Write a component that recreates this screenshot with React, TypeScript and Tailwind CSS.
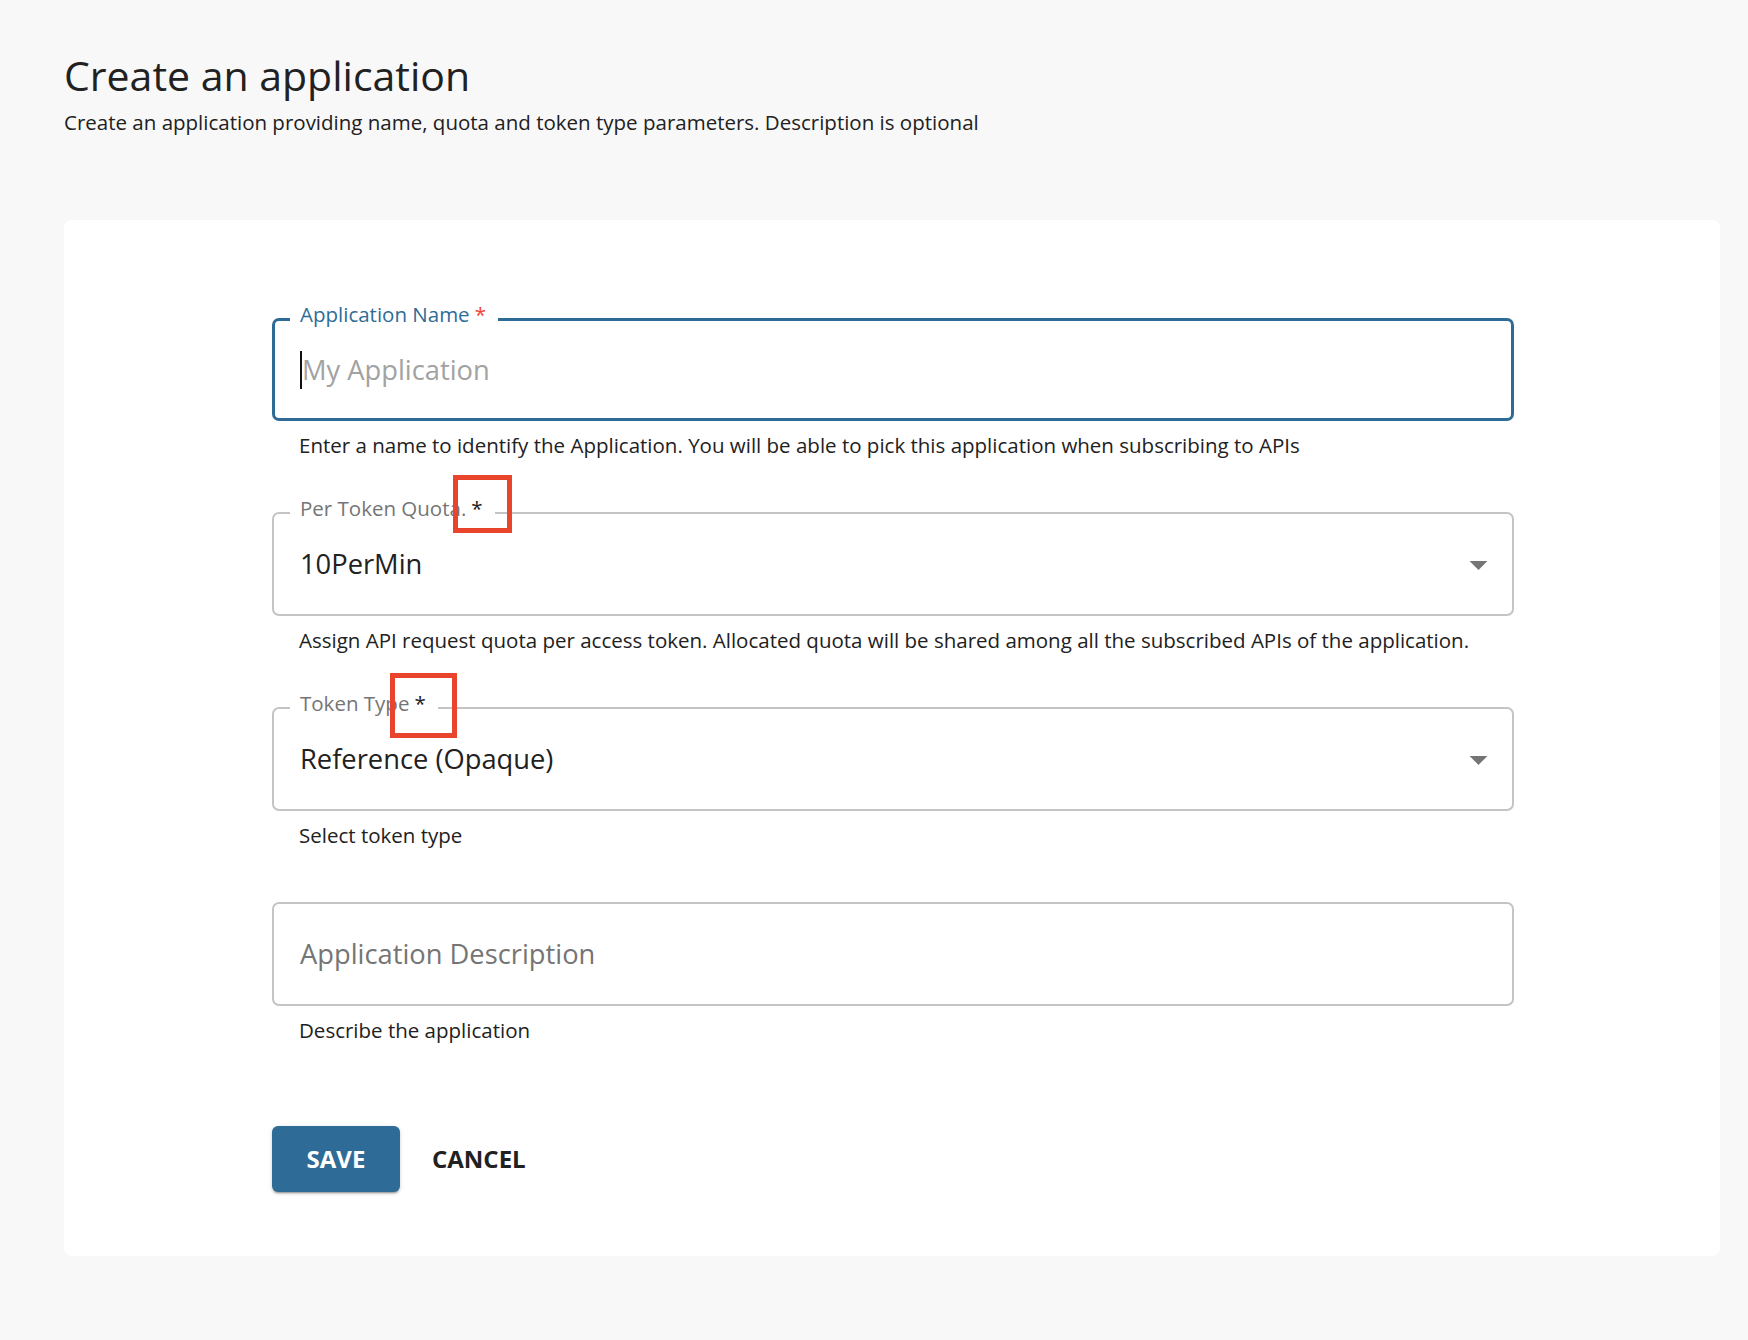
import { ReactNode } from "react";

type FieldProps = {
  label?: string;
  focused?: boolean;
  select?: boolean;
  helper: string;
  children: ReactNode;
  mark?: ReactNode;
};

// 枠線の上に乗るラベルつきの入力欄
const OutlinedField = ({ label, focused, select, helper, children, mark }: FieldProps) => (
  <div>
    <div className="relative">
      <div
        className={
          focused
            ? "flex h-[103px] items-center rounded-[7px] border-[3px] border-[#2e6c97] pl-[25px] pr-[11px]"
            : "flex h-[104px] items-center rounded-[7px] border-2 border-[#c4c4c4] pl-[26px] pr-[12px]"
        }
      >
        <div className="flex flex-1 items-center text-[27.3px] leading-[36px]">{children}</div>
        {select && (
          <svg viewBox="0 0 24 24" className="h-[43px] w-[43px] fill-[#757575]">
            <path d="M7 10l5 5 5-5z" />
          </svg>
        )}
      </div>
      {label && (
        <label
          className={
            focused
              ? "absolute left-[18px] top-[-18px] bg-white pl-[10px] pr-[12px] text-[20.5px] leading-[28px] text-[#2e6c97]"
              : "absolute left-[18px] top-[-18px] bg-white pl-[10px] pr-[12px] text-[20.5px] leading-[28px] text-[#757575]"
          }
        >
          {label}
          <span className={focused ? "ml-[5px] text-[#f44336]" : "ml-[5px] text-[#212121]"}>*</span>
        </label>
      )}
      {mark}
    </div>
    <p className="mt-[10px] pl-[27px] text-[20.5px] leading-[28px] text-[#212121]">{helper}</p>
  </div>
);

const App = () => {
  return (
    <div className="min-h-screen bg-[#f8f8f8] pb-[84px] pl-[64px] pr-[28px] pt-[51px] font-['Open_Sans',sans-serif] text-[#212121]">
      <h1 className="text-[41px] leading-[48px]">Create an application</h1>
      <p className="mt-[9px] text-[20.5px] leading-[28px]">
        Create an application providing name, quota and token type parameters. Description is optional
      </p>

      <div className="mt-[84px] rounded-[8px] bg-white pb-[64px] pl-[208px] pr-[206px] pt-[98px]">
        <div className="flex flex-col gap-[53px]">
          <OutlinedField
            label="Application Name"
            focused
            helper="Enter a name to identify the Application. You will be able to pick this application when subscribing to APIs"
          >
            <span className="inline-block h-[38px] w-[2px] bg-[#111]" />
            <span className="text-[#a2a2a2]">My Application</span>
          </OutlinedField>

          <OutlinedField
            label="Per Token Quota."
            select
            helper="Assign API request quota per access token. Allocated quota will be shared among all the subscribed APIs of the application."
            mark={
              <div className="absolute left-[181px] top-[-37px] h-[58px] w-[59px] border-[5px] border-[#e8452c]" />
            }
          >
            <span>10PerMin</span>
          </OutlinedField>

          <OutlinedField
            label="Token Type"
            select
            helper="Select token type"
            mark={
              <div className="absolute left-[118px] top-[-34px] h-[65px] w-[67px] border-[5px] border-[#e8452c]" />
            }
          >
            <span>Reference (Opaque)</span>
          </OutlinedField>

          <OutlinedField helper="Describe the application">
            <span className="text-[#757575]">Application Description</span>
          </OutlinedField>
        </div>

        <div className="mt-[82px] flex items-center gap-[32px]">
          <button className="h-[66px] w-[128px] rounded-[6px] bg-[#2e6c97] text-[24px] font-bold text-white shadow-[0_3px_1px_-2px_rgba(0,0,0,0.2),0_2px_2px_0_rgba(0,0,0,0.14),0_1px_5px_0_rgba(0,0,0,0.12)]">
            SAVE
          </button>
          <button className="text-[24px] font-bold text-[#212121]">CANCEL</button>
        </div>
      </div>
    </div>
  );
};

export default App;
